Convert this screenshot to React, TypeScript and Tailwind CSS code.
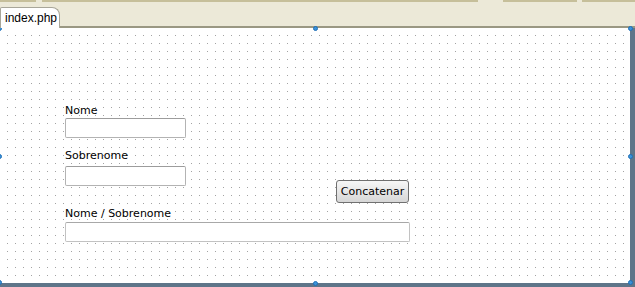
import React from "react";

const font = { fontFamily: '"DejaVu Sans", Verdana, sans-serif' };

function Handle({ className }: { className: string }) {
  return (
    <div
      className={`absolute w-[5px] h-[5px] rounded-full bg-[#3b93d9] border border-[#1f6fb8] ${className}`}
    />
  );
}

export default function App() {
  return (
    <div className="w-[635px] h-[287px] overflow-hidden bg-[#5f7589] flex flex-col" style={font}>
      {/* tab bar */}
      <div className="h-[28px] bg-[#ece9d8] border-b-2 border-[#9a9883] flex flex-col relative">
        <div className="flex h-[2px]">
          <div className="w-[36px] bg-[#c6bf9a]" />
          <div className="w-[6px]" />
          <div className="w-[436px] bg-[#c6bf9a]" />
          <div className="w-[25px]" />
          <div className="w-[74px] bg-[#c6bf9a]" />
          <div className="w-[5px]" />
          <div className="flex-1 bg-[#c6bf9a]" />
        </div>
        <div className="flex-1 flex items-end">
          <div
            className="w-[60px] h-[21px] bg-white border border-b-0 border-[#a8a699] rounded-tr-[8px] rounded-tl-[2px] pl-[4px] pt-[3px] leading-[14px] text-black -mb-[2px] z-10"
            style={{ fontFamily: '"Liberation Sans", Arial, sans-serif', fontSize: "12px" }}
          >
            index.php
          </div>
        </div>
      </div>

      {/* canvas */}
      <div className="flex-1 flex">
        <div className="relative w-[630px] h-[255px] bg-white bg-[linear-gradient(to_right,#ffffff_7px,transparent_7px),linear-gradient(to_bottom,#ffffff_7px,#a3a3a3_7px)] bg-[size:8px_8px]">
          <div className="flex flex-col pl-[65px] pt-[76px] text-[11px] leading-[13px] text-black">
            <div className="h-[13px]">Nome</div>
            <div className="mt-[1px] w-[121px] h-[20px] bg-white border border-[#b3b3b3] border-t-[#9c9c9c] rounded-[2px]" />
            <div className="mt-[11px] h-[13px]">Sobrenome</div>
            <div className="mt-[4px] w-[345px] flex justify-between items-start">
              <div className="w-[121px] h-[20px] bg-white border border-[#b3b3b3] border-t-[#9c9c9c] rounded-[2px]" />
              <button className="mt-[14px] mr-[1px] w-[73px] h-[23px] rounded-[3px] border border-[#707070] bg-gradient-to-b from-[#f7f7f7] to-[#d6d6d6] text-[11px] leading-[13px] text-black flex items-center justify-center">
                Concatenar
              </button>
            </div>
            <div className="mt-[4px] h-[13px]">Nome / Sobrenome</div>
            <div className="mt-[2px] w-[345px] h-[20px] bg-white border border-[#c2c2c2] border-t-[#a8a8a8] rounded-[2px]" />
          </div>

          <Handle className="-left-[3px] -top-[2px]" />
          <Handle className="left-[313px] -top-[2px]" />
          <Handle className="left-[628px] -top-[2px]" />
          <Handle className="-left-[3px] top-[126px]" />
          <Handle className="left-[628px] top-[126px]" />
          <Handle className="-left-[3px] top-[252px]" />
          <Handle className="left-[313px] top-[253px]" />
          <Handle className="left-[628px] top-[252px]" />
        </div>
      </div>
    </div>
  );
}
